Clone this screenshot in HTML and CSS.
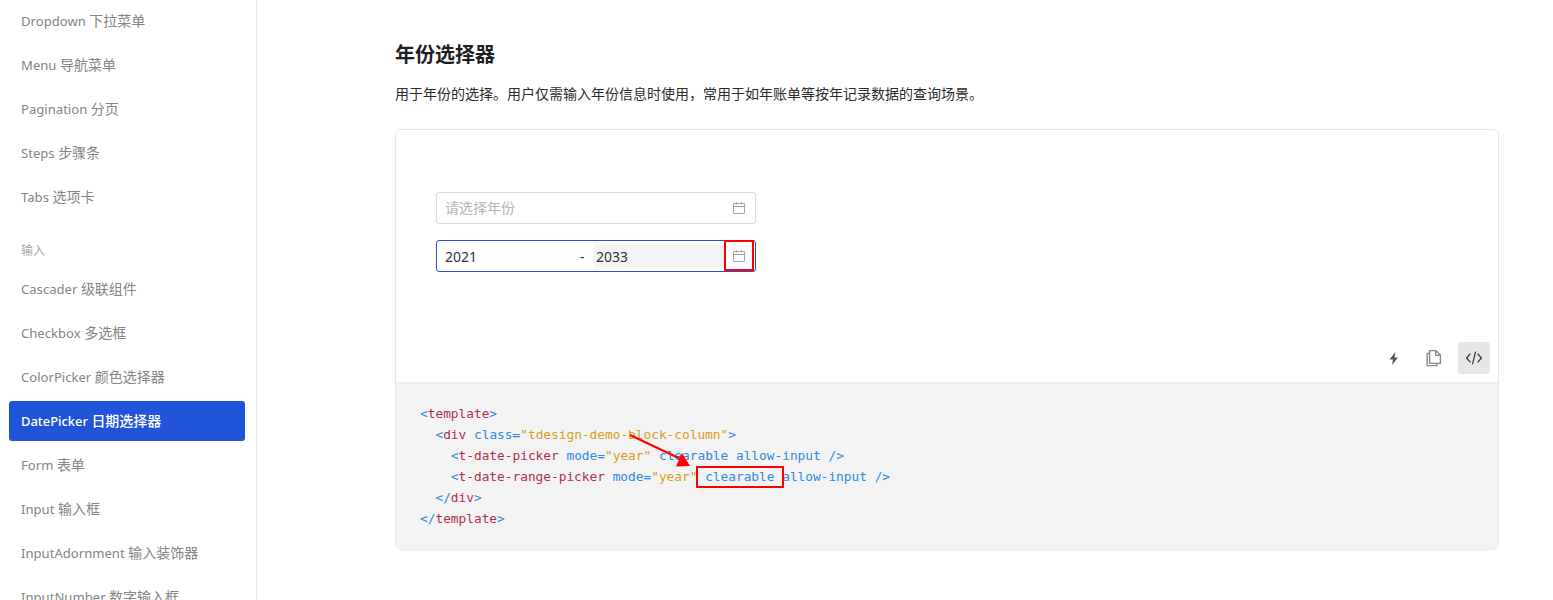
FILE: index.html
```html
<!DOCTYPE html>
<html lang="zh">
<head>
<meta charset="utf-8">
<title>DatePicker 日期选择器</title>
<link rel="stylesheet" href="styles.css">
</head>
<body>
<div class="page">
  <aside class="sidebar">
    <a class="nav-item"><span class="en">Dropdown</span> 下拉菜单</a>
    <a class="nav-item"><span class="en">Menu</span> 导航菜单</a>
    <a class="nav-item"><span class="en">Pagination</span> 分页</a>
    <a class="nav-item"><span class="en">Steps</span> 步骤条</a>
    <a class="nav-item"><span class="en">Tabs</span> 选项卡</a>
    <div class="nav-group">输入</div>
    <a class="nav-item"><span class="en">Cascader</span> 级联组件</a>
    <a class="nav-item"><span class="en">Checkbox</span> 多选框</a>
    <a class="nav-item"><span class="en">ColorPicker</span> 颜色选择器</a>
    <a class="nav-item active"><span class="en">DatePicker</span> 日期选择器</a>
    <a class="nav-item"><span class="en">Form</span> 表单</a>
    <a class="nav-item"><span class="en">Input</span> 输入框</a>
    <a class="nav-item"><span class="en">InputAdornment</span> 输入装饰器</a>
    <a class="nav-item"><span class="en">InputNumber</span> 数字输入框</a>
  </aside>
  <main class="content">
    <h2 class="title">年份选择器</h2>
    <p class="desc">用于年份的选择。用户仅需输入年份信息时使用，常用于如年账单等按年记录数据的查询场景。</p>
    <section class="card">
      <div class="demo">
        <div class="field">
          <span class="placeholder">请选择年份</span>
          <svg class="cal" viewBox="0 0 16 16"><path d="M2.5 3.5h11v10h-11zM2.5 6.5h11M5.5 2v2.5M10.5 2v2.5"/></svg>
        </div>
        <div class="field focus">
          <span class="range-start">2021</span>
          <span class="range-sep">-</span>
          <span class="range-end">2033</span>
          <svg class="cal" viewBox="0 0 16 16"><path d="M2.5 3.5h11v10h-11zM2.5 6.5h11M5.5 2v2.5M10.5 2v2.5"/></svg>
        </div>
      </div>
      <div class="actions">
        <button class="act"><svg viewBox="0 0 20 20"><path class="fill" d="M11.5 4 5.5 11.5H9L8 17 14 9.5H10.5z"/></svg></button>
        <button class="act"><svg viewBox="0 0 20 20"><path class="line soft" d="M5.6 2.6h6.4l4.4 4.4v8.4H5.6zM11.8 2.6v4.6h4.6M5.6 5.4H3.2v12.2h9.6v-2.2"/></svg></button>
        <button class="act on"><svg viewBox="0 0 20 20"><path class="line" d="M6.4 5.6 2.6 10l3.8 4.4M13.6 5.6 17.4 10l-3.8 4.4M11.6 3.6 8.4 16.4"/></svg></button>
      </div>
      <pre class="code"><span class="p">&lt;</span><span class="t">template</span><span class="p">&gt;</span>
  <span class="p">&lt;</span><span class="t">div</span> <span class="a">class=</span><span class="s">"tdesign-demo-block-column"</span><span class="p">&gt;</span>
    <span class="p">&lt;</span><span class="t">t-date-picker</span> <span class="a">mode=</span><span class="s">"year"</span> <span class="a">clearable allow-input</span> <span class="p">/&gt;</span>
    <span class="p">&lt;</span><span class="t">t-date-range-picker</span> <span class="a">mode=</span><span class="s">"year"</span> <span class="a">clearable allow-input</span> <span class="p">/&gt;</span>
  <span class="p">&lt;/</span><span class="t">div</span><span class="p">&gt;</span>
<span class="p">&lt;/</span><span class="t">template</span><span class="p">&gt;</span></pre>
    </section>
  </main>
  <div class="mark mark-icon"></div>
  <div class="mark mark-code"></div>
  <svg class="arrow" viewBox="0 0 70 40"><path d="M1 1 56 27" stroke="#f00" stroke-width="2" fill="none"/><path d="M61 32 47 32.5 53 19z" fill="#f00"/></svg>
</div>
</body>
</html>
```
FILE: styles.css
```css
* { box-sizing: border-box; }
html, body { margin: 0; height: 100%; overflow: hidden; background: #fff; }
body { font-family: "Noto Sans", "Noto Sans CJK SC", sans-serif; font-size: 14px; color: #1f1f1f; }
.page { position: relative; display: flex; width: 1553px; height: 600px; overflow: hidden; }

.sidebar { flex: 0 0 257px; height: 600px; padding: 1px 11px 0 9px; border-right: 1px solid #e7e7e7; display: flex; flex-direction: column; gap: 4px; overflow: hidden; }
.nav-item { flex: none; display: flex; align-items: center; gap: 3.5px; height: 40px; padding-left: 12px; border-radius: 3px; color: #858585; line-height: 22px; }
.en { font-size: 13.1px; }
.nav-item.active { background: #2054d9; color: #fff; font-weight: 500; }
.nav-item.active .en { font-size: 12.9px; }
.nav-group { flex: none; height: 20px; margin: 20px 0 4px; padding-left: 12px; font-size: 12px; line-height: 20px; color: #a6a6a6; }

.content { flex: 1; padding: 0 54px 0 138px; }
.title { margin: 41px 0 0; font-size: 20px; line-height: 28px; font-weight: 700; color: #1f1f1f; }
.desc { margin: 13px 0 0; font-size: 14px; line-height: 24px; color: #2b2b2b; }

.card { margin-top: 23px; border: 1px solid #e7e7e7; border-radius: 6px; overflow: hidden; }
.demo { display: flex; flex-direction: column; gap: 16px; height: 212px; padding: 62px 40px 0; }
.field { display: flex; align-items: center; width: 320px; height: 32px; padding: 0 8px; border: 1px solid #dcdcdc; border-radius: 3px; }
.field.focus { border-color: #2054d9; }
.placeholder { flex: 1; padding-bottom: 2px; color: #b5b5b5; }
.range-start { width: 135px; color: #333; }
.range-sep { width: 13px; color: #333; }
.range-end { width: 131px; height: 22px; padding-left: 3px; line-height: 23px; background: #f3f3f3; color: #333; border-radius: 3px; }
.cal { flex: none; width: 16px; height: 16px; margin-left: auto; fill: none; stroke: #a3a3a3; stroke-width: 1; }

.actions { display: flex; justify-content: flex-end; gap: 8px; height: 40px; padding-right: 8px; }
.act { width: 32px; height: 32px; padding: 0; border: 0; border-radius: 3px; background: transparent; display: flex; align-items: center; justify-content: center; }
.act.on { background: #e7e7e7; }
.act svg { width: 20px; height: 20px; }
.fill { fill: #555; }
.line { fill: none; stroke: #333; stroke-width: 1.2; }
.line.soft { stroke: #8a8a8a; stroke-width: 1.4; }

.code { margin: 0; height: 167px; padding: 20px 24px 0; background: #f3f3f3; border-top: 1px solid #ececec; font-family: "DejaVu Sans Mono", monospace; font-size: 12.8px; line-height: 21px; }
.p, .a { color: #2f8ae0; }
.t { color: #b2304f; }
.s { color: #d59f1c; }

.mark { position: absolute; border: 2px solid #f00; }
.mark-icon { left: 724px; top: 240px; width: 30px; height: 31px; }
.mark-code { left: 696px; top: 466px; width: 88px; height: 22px; }
.arrow { position: absolute; left: 629px; top: 434px; width: 70px; height: 40px; }
```
